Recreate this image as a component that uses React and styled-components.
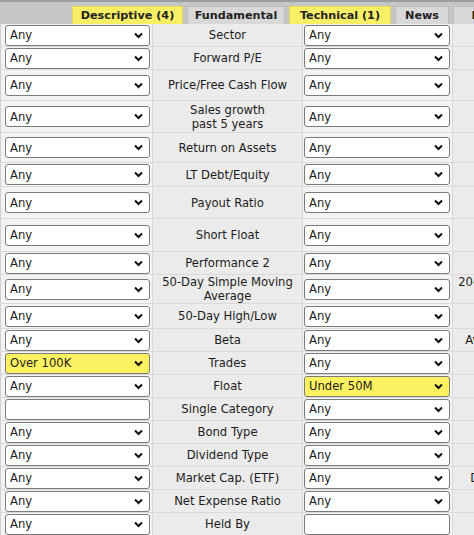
import styled, { createGlobalStyle } from 'styled-components';

const GlobalStyle = createGlobalStyle`
    html, body {
        margin: 0;
        padding: 0;
        overflow: hidden;
        background: #ececec;
    }
`;

const Screener = styled.div`
    width: 620px;
    font-family: "DejaVu Sans", Verdana, sans-serif;
    font-size: 11.6px;
    color: #1c1c1c;
`;

const TabBar = styled.div`
    height: 24px;
    box-sizing: border-box;
    padding: 4px 0 0 72px;
    display: flex;
    gap: 4px;
    background: #c6c6c6;
    border-top: 2px solid #9c9c9c;
`;

const Tab = styled.div`
    width: ${props => props.width}px;
    height: 18px;
    box-sizing: border-box;
    display: flex;
    align-items: center;
    justify-content: center;
    font-weight: bold;
    font-size: 11.2px;
    color: #222;
    background: ${props => props.active ? '#f8ef66' : '#d8d8d8'};
    border: 1px solid ${props => props.active ? '#e2d85a' : '#bdbdbd'};
    border-bottom: none;
    white-space: nowrap;
    overflow: hidden;
`;

const Row = styled.div`
    display: grid;
    grid-template-columns: 153px 150px 150px 142px;
    height: ${props => props.h}px;
    border-bottom: 1px solid #d9d9d9;
    box-sizing: border-box;
`;

const SelectCell = styled.div`
    display: flex;
    align-items: center;
    padding-left: ${props => props.pad}px;
    background: #f3f3f3;
    border-right: 1px solid #d9d9d9;
    border-left: ${props => props.first ? '1px solid #cfcfcf' : 'none'};
`;

const LabelCell = styled.div`
    display: flex;
    align-items: center;
    justify-content: center;
    text-align: center;
    line-height: 14px;
    padding: 0 2px;
    background: #ebebeb;
    border-right: 1px solid #d9d9d9;
    white-space: ${props => props.nowrap ? 'nowrap' : 'normal'};
`;

const SelectWrap = styled.div`
    position: relative;
    width: ${props => props.width}px;
    height: 21px;
`;

const Select = styled.select`
    appearance: none;
    width: 100%;
    height: 100%;
    box-sizing: border-box;
    margin: 0;
    padding: 0 0 0 4px;
    border: 1px solid #7b7b7b;
    border-radius: 3px;
    background: ${props => props.highlight ? '#fcf160' : '#ffffff'};
    font-family: "DejaVu Sans", Verdana, sans-serif;
    font-size: 11.6px;
    color: #1c1c1c;
    outline: none;
`;

const Chevron = styled.svg`
    position: absolute;
    right: 7px;
    top: 7px;
    width: 9px;
    height: 7px;
    pointer-events: none;
`;

const TextInput = styled.input`
    width: ${props => props.width}px;
    height: 21px;
    box-sizing: border-box;
    margin: 0;
    border: 1px solid #7b7b7b;
    border-radius: 3px;
    background: #fff;
`;

const Dropdown = ({ value, width, highlight }) => (
    <SelectWrap width={width}>
        <Select highlight={highlight} defaultValue={value}>
            <option>{value}</option>
        </Select>
        <Chevron viewBox="0 0 9 7">
            <path d="M1 1.5 L4.5 5 L8 1.5" fill="none" stroke="#111" strokeWidth="2" />
        </Chevron>
    </SelectWrap>
);

const rows = [
    { h: 23, label: 'Sector' },
    { h: 23, label: 'Forward P/E' },
    { h: 31, label: 'Price/Free Cash Flow' },
    { h: 32, label: <>Sales growth<br />past 5 years</> },
    { h: 30, label: 'Return on Assets' },
    { h: 24, label: 'LT Debt/Equity' },
    { h: 32, label: 'Payout Ratio' },
    { h: 33, label: 'Short Float' },
    { h: 23, label: 'Performance 2' },
    { h: 29, label: <>50-Day Simple Moving<br />Average</>, extra: <>20-Day Simple Moving<br />Average</> },
    { h: 25, label: '50-Day High/Low' },
    { h: 23, label: 'Beta', extra: 'Average True Range' },
    { h: 23, label: 'Trades', left: 'Over 100K' },
    { h: 23, label: 'Float', right: 'Under 50M' },
    { h: 23, label: 'Single Category', left: null },
    { h: 23, label: 'Bond Type' },
    { h: 23, label: 'Dividend Type' },
    { h: 23, label: 'Market Cap. (ETF)', extra: 'Discount/Premium' },
    { h: 23, label: 'Net Expense Ratio' },
    { h: 23, label: 'Held By', right: null },
];

const Field = ({ value, width }) => {
    if (value === null) return <TextInput width={width} />;
    const v = value || 'Any';
    return <Dropdown value={v} width={width} highlight={v !== 'Any'} />;
};

const App = () => {
    return (
        <>
            <GlobalStyle />
            <Screener>
                <TabBar>
                    <Tab active width={111}>Descriptive (4)</Tab>
                    <Tab width={98}>Fundamental</Tab>
                    <Tab active width={102}>Technical (1)</Tab>
                    <Tab width={54}>News</Tab>
                    <Tab width={60}>ETF</Tab>
                </TabBar>
                {rows.map((row, i) => (
                    <Row key={i} h={row.h}>
                        <SelectCell first pad={4}>
                            <Field value={row.left} width={145} />
                        </SelectCell>
                        <LabelCell>{row.label}</LabelCell>
                        <SelectCell pad={1}>
                            <Field value={row.right} width={146} />
                        </SelectCell>
                        <LabelCell nowrap>{row.extra || ''}</LabelCell>
                    </Row>
                ))}
            </Screener>
        </>
    );
};

export default App;
